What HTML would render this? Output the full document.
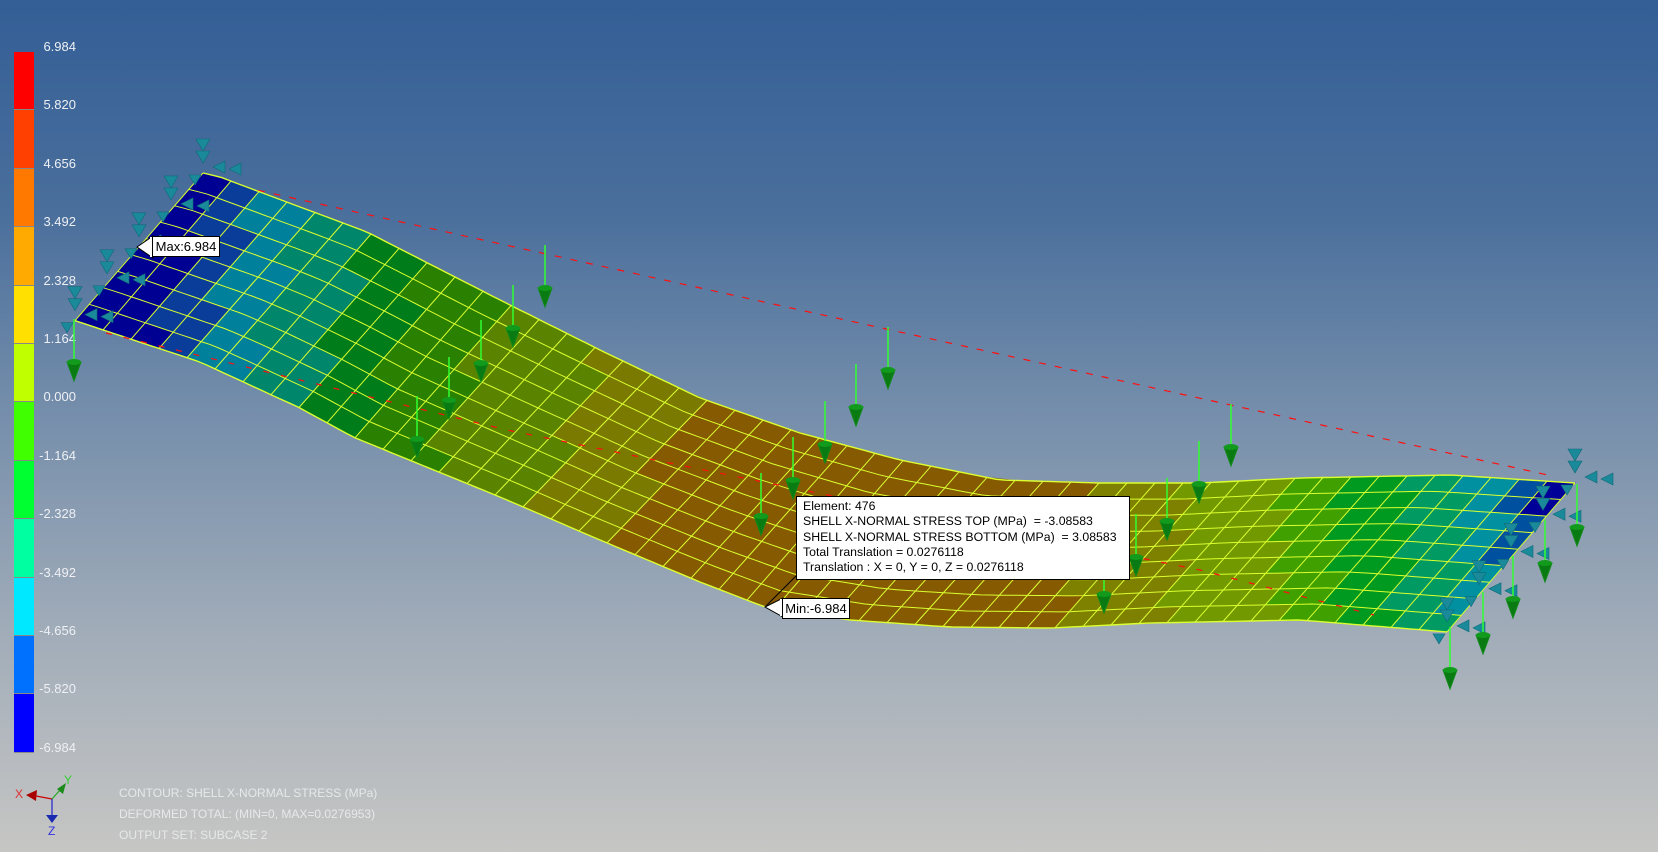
<!DOCTYPE html>
<html><head><meta charset="utf-8"><style>
html,body{margin:0;padding:0;}
body{width:1658px;height:852px;overflow:hidden;position:relative;font-family:"Liberation Sans",sans-serif;
background:linear-gradient(180deg,#335e96 0%,#4a6f9c 25%,#7890ac 50%,#a2adb9 75%,#c6c6c4 100%);}
.lg{position:absolute;left:14px;width:20px;}
.lb{position:absolute;right:1582px;color:#eef0f4;font-size:13px;line-height:14px;}
.bt{position:absolute;left:119px;color:#e6e8ea;font-size:12px;}
.box{position:absolute;background:#fff;border:1px solid #000;font-size:12.5px;color:#000;}
</style></head><body>
<div id="legend"></div>
<svg id="s" width="1658" height="852" style="position:absolute;left:0;top:0"></svg>
<div class="box" style="left:796px;top:496px;width:326px;height:80px;padding:2px 0 0 6px;line-height:15.3px;font-size:12.3px;">Element: 476<br>SHELL X-NORMAL STRESS TOP (MPa)&nbsp; = -3.08583<br>SHELL X-NORMAL STRESS BOTTOM (MPa)&nbsp; = 3.08583<br>Total Translation = 0.0276118<br>Translation : X = 0, Y = 0, Z = 0.0276118</div>
<div class="box" style="left:782px;top:598px;width:66px;height:19px;line-height:19px;padding-left:0;text-align:center;font-size:13px;">Min:-6.984</div>
<div class="box" style="left:152px;top:236px;width:66px;height:19px;line-height:19px;text-align:center;font-size:13px;">Max:6.984</div>
<div class="bt" style="top:786px">CONTOUR: SHELL X-NORMAL STRESS (MPa)</div>
<div class="bt" style="top:807px">DEFORMED TOTAL: (MIN=0, MAX=0.0276953)</div>
<div class="bt" style="top:828px">OUTPUT SET: SUBCASE 2</div>
<script>
(function(){
var cols=['#ff0000','#ff4000','#ff7800','#ffaa00','#ffe000','#c0ff00','#40ff00','#00ff30','#00ffa0','#00e8ff','#0070ff','#0000ff'];
var labs=['6.984','5.820','4.656','3.492','2.328','1.164','0.000','-1.164','-2.328','-3.492','-4.656','-5.820','-6.984'];
var h='',top=52,sh=58.4;
for(var i=0;i<12;i++){h+='<div class="lg" style="top:'+(top+i*sh)+'px;height:'+(sh-1)+'px;background:'+cols[i]+';border-bottom:1px solid #888"></div>';}
for(var i=0;i<13;i++){h+='<div class="lb" style="top:'+(top+i*sh-12)+'px">'+labs[i]+'</div>';}
document.getElementById('legend').innerHTML=h;

var T=[[203,173],[220,177],[367,232],[500,300],[600,350],[700,398],[800,433],[900,460],[1000,480],[1100,483],[1200,483],[1300,478],[1450,475],[1575,483]];
var B=[[73,320],[200,362],[300,408],[353,437],[500,497],[600,540],[700,582],[765,607],[850,620],[950,627],[1050,628],[1150,623],[1300,620],[1448,632]];
function yAt(P,x){for(var i=0;i<P.length-1;i++){if(x<=P[i+1][0]){var t=(x-P[i][0])/(P[i+1][0]-P[i][0]);return P[i][1]+t*(P[i+1][1]-P[i][1]);}}return P[P.length-1][1];}
var NC=49,NR=9;
function pt(u,v){var xt=203+u*(1575-203),xb=xt-128;if(xb<73)xb=73;if(xb>1448)xb=1448;
 var yt=yAt(T,xt),yb=yAt(B,xb);return [xt+(xb-xt)*v,yt+(yb-yt)*v];}
function color(p){
 var L=[[222,'#000092'],[258,'#0a3c9a'],[310,'#00809a'],[370,'#00866a'],[425,'#007c1a'],[500,'#2a8000'],[600,'#5a8400'],[690,'#7a7a00'],[1080,'#855a00'],[1180,'#7e8000'],[1280,'#729a00'],[1345,'#40a000'],[1405,'#009a20'],[1460,'#009a62'],[1500,'#0090a0'],[1540,'#0050a0'],[9999,'#000098']];
 for(var i=0;i<L.length;i++)if(p<L[i][0])return L[i][1];}
var s='';
s+='<line x1="211" y1="180" x2="1548" y2="475" stroke="#ff1010" stroke-width="1.2" stroke-dasharray="7,9"/>';
for(var c=0;c<NC;c++)for(var r=0;r<NR;r++){
 var a=pt(c/NC,r/NR),b=pt((c+1)/NC,r/NR),d=pt((c+1)/NC,(r+1)/NR),e=pt(c/NC,(r+1)/NR);
 var xt=203+(c+0.5)/NC*1372, v=(r+0.5)/NR, k=xt<900?61:(xt<1100?61+(xt-900)*0.3:120), p=xt-k*v;
 var col=color(p);
 s+='<polygon points="'+a+' '+b+' '+d+' '+e+'" fill="'+col+'" stroke="'+col+'" stroke-width="0.8"/>';}
function line(pts){return pts.map(function(q){return q[0].toFixed(1)+','+q[1].toFixed(1)}).join(' ');}
for(var r=0;r<=NR;r++){var P=[];for(var c=0;c<=NC*3;c++)P.push(pt(c/(NC*3),r/NR));s+='<polyline points="'+line(P)+'" fill="none" stroke="#dcff30" stroke-width="'+(r==0||r==NR?1.4:1)+'"/>';}
for(var c=0;c<=NC;c++){var P=[pt(c/NC,0),pt(c/NC,1)];s+='<polyline points="'+line(P)+'" fill="none" stroke="#dcff30" stroke-width="1"/>';}
s+='<polyline points="106,333 300,380 507,430 793,488 1000,530 1200,570 1374,615" fill="none" stroke="#ff1010" stroke-width="1.2" stroke-dasharray="6,12"/>';
function teal(x,y){return '<g fill="#1a8a9a" stroke="#0e6a78" stroke-width="0.6"><polygon points="'+(x-7)+','+(y-34)+' '+(x+7)+','+(y-34)+' '+x+','+(y-22)+'"/><polygon points="'+(x-7)+','+(y-22)+' '+(x+7)+','+(y-22)+' '+x+','+(y-10)+'"/><polygon points="'+(x+10)+','+(y-6)+' '+(x+22)+','+(y-12)+' '+(x+22)+','+y+'"/><polygon points="'+(x+26)+','+(y-4)+' '+(x+38)+','+(y-10)+' '+(x+38)+','+(y+2)+'"/><polygon points="'+(x-2)+','+(y+2)+' '+(x-14)+','+(y+2)+' '+(x-8)+','+(y+12)+'"/></g>';}
for(var r=0;r<=8;r+=2){var q=pt(0,r/8);s+=teal(q[0],q[1]);q=pt(1,r/8);s+=teal(q[0],q[1]);}
function cone(x,y){return '<line x1="'+x+'" y1="'+(y-48)+'" x2="'+x+'" y2="'+(y-4)+'" stroke="#30ff30" stroke-width="1.5"/><polygon points="'+(x-7)+','+(y-5)+' '+(x+7)+','+(y-5)+' '+x+','+(y+14)+'" fill="#0a7a12" stroke="#108a18" stroke-width="1"/><ellipse cx="'+x+'" cy="'+(y-5)+'" rx="7" ry="3" fill="#129a1c"/>';}
var C=[[74,367],[545,293],[513,333],[481,368],[449,405],[417,444],[888,375],[856,412],[825,449],[793,485],[761,521],[1231,452],[1199,489],[1167,526],[1136,562],[1104,599],[1577,532],[1545,568],[1513,604],[1483,640],[1450,675]];
C.forEach(function(q){s+=cone(q[0],q[1]);});
s+='<polygon points="137,247 153,236 153,258" fill="#fff" stroke="#000"/><rect x="150" y="237" width="5" height="20" fill="#fff"/>';
s+='<polygon points="765,607 783,598 783,617" fill="#fff" stroke="#000"/><rect x="780" y="599" width="5" height="17" fill="#fff"/>';
s+='<line x1="796" y1="576" x2="766" y2="606" stroke="#000" stroke-width="1"/>';
s+='<line x1="52" y1="799" x2="36" y2="796" stroke="#c00" stroke-width="1.2"/><polygon points="26,795 37,790 36,801" fill="#a00"/>';
s+='<line x1="52" y1="799" x2="60" y2="790" stroke="#2a2" stroke-width="1.2"/><polygon points="66,783 57,789 63,794" fill="#1a8a1a"/>';
s+='<line x1="52" y1="799" x2="52" y2="815" stroke="#22c" stroke-width="1.2"/><polygon points="46,815 58,815 52,823" fill="#1a2ab0"/>';
s+='<text x="15" y="798" fill="#e03030" font-size="12" font-family="Liberation Sans">X</text><text x="64" y="784" fill="#30d030" font-size="12" font-family="Liberation Sans">Y</text><text x="48" y="835" fill="#3030e0" font-size="12" font-family="Liberation Sans">Z</text>';
document.getElementById('s').innerHTML=s;
})();
</script>
</body></html>
